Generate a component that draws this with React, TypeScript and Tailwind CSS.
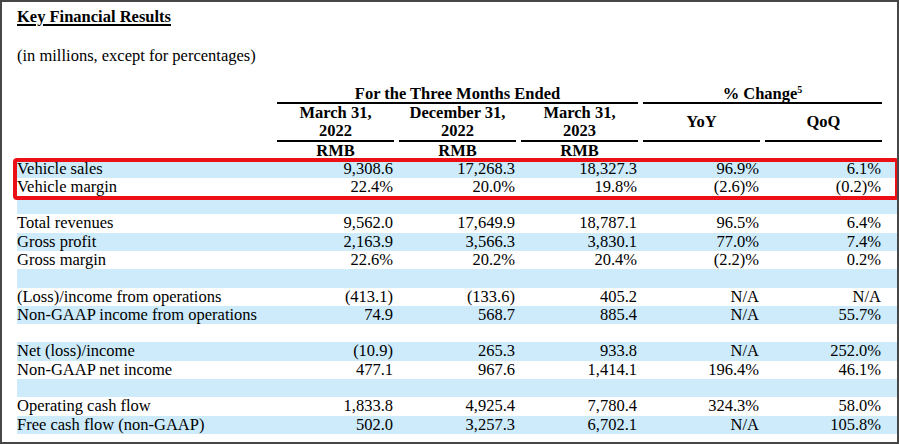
import React from 'react'

type Row = string[] | null

const rows: Row[] = [
  ['Vehicle sales', '9,308.6', '17,268.3', '18,327.3', '96.9%', '6.1%'],
  ['Vehicle margin', '22.4%', '20.0%', '19.8%', '(2.6)%', '(0.2)%'],
  null,
  ['Total revenues', '9,562.0', '17,649.9', '18,787.1', '96.5%', '6.4%'],
  ['Gross profit', '2,163.9', '3,566.3', '3,830.1', '77.0%', '7.4%'],
  ['Gross margin', '22.6%', '20.2%', '20.4%', '(2.2)%', '0.2%'],
  null,
  ['(Loss)/income from operations', '(413.1)', '(133.6)', '405.2', 'N/A', 'N/A'],
  ['Non-GAAP income from operations', '74.9', '568.7', '885.4', 'N/A', '55.7%'],
  null,
  ['Net (loss)/income', '(10.9)', '265.3', '933.8', 'N/A', '252.0%'],
  ['Non-GAAP net income', '477.1', '967.6', '1,414.1', '196.4%', '46.1%'],
  null,
  ['Operating cash flow', '1,833.8', '4,925.4', '7,780.4', '324.3%', '58.0%'],
  ['Free cash flow (non-GAAP)', '502.0', '3,257.3', '6,702.1', 'N/A', '105.8%'],
]

const grid = 'grid grid-cols-[255px_117px_117px_117px_117px_117px] gap-x-[5px] pr-[7px]'

function DataRow({ row, index }: { row: Row; index: number }) {
  const bg = index % 2 === 0 ? 'bg-[#cdebfb]' : 'bg-white'
  return (
    <div className={`${grid} ${bg} h-[18.3px] leading-[18.3px]`}>
      {row ? (
        row.map((cell, i) => (
          <div key={i} className={i === 0 ? 'whitespace-nowrap' : 'pr-[1px] text-right whitespace-nowrap'}>
            {cell}
          </div>
        ))
      ) : (
        <div className="col-span-6">&nbsp;</div>
      )}
    </div>
  )
}

export default function App() {
  return (
    <div
      className="h-[444px] w-[899px] overflow-hidden border-2 border-[#474747] bg-white pl-[15px] pt-[5.5px] text-[16.5px] text-black"
      style={{ fontFamily: '"Liberation Serif", "Times New Roman", serif' }}
    >
      <h1 className="font-bold leading-[18px] underline decoration-[1.5px] underline-offset-[2px]">Key Financial Results</h1>
      <p className="mt-[21px] leading-[18px]">(in millions, except for percentages)</p>

      {/* header */}
      <div className={`${grid} mt-[20.5px] font-bold`}>
        <div />
        <div className="col-span-3 border-b-2 border-black text-center leading-[17px]">For the Three Months Ended</div>
        <div className="col-span-2 border-b-2 border-black text-center leading-[17px]">
          % Change<span className="relative -top-[6px] text-[10px] leading-none">5</span>
        </div>
      </div>
      <div className={`${grid} font-bold leading-[18px]`}>
        <div />
        <div className="border-b-2 border-black text-center">
          March 31,
          <br />
          2022
        </div>
        <div className="border-b-2 border-black text-center">
          December 31,
          <br />
          2022
        </div>
        <div className="border-b-2 border-black text-center">
          March 31,
          <br />
          2023
        </div>
        <div className="flex items-center justify-center border-b-2 border-black">YoY</div>
        <div className="flex items-center justify-center border-b-2 border-black">QoQ</div>
      </div>
      <div className={`${grid} font-bold leading-[17.5px]`}>
        <div />
        <div className="text-center">RMB</div>
        <div className="text-center">RMB</div>
        <div className="text-center">RMB</div>
        <div />
        <div />
      </div>

      {/* body */}
      <div className="relative">
        <DataRow row={rows[0]} index={0} />
        <DataRow row={rows[1]} index={1} />
        <div className="pointer-events-none absolute -bottom-[4px] -left-[4px] -right-[2px] -top-[2px] rounded-[4px] border-[4px] border-[#ec0f16]" />
      </div>
      {rows.slice(2).map((row, i) => (
        <DataRow key={i} row={row} index={i + 2} />
      ))}
    </div>
  )
}
